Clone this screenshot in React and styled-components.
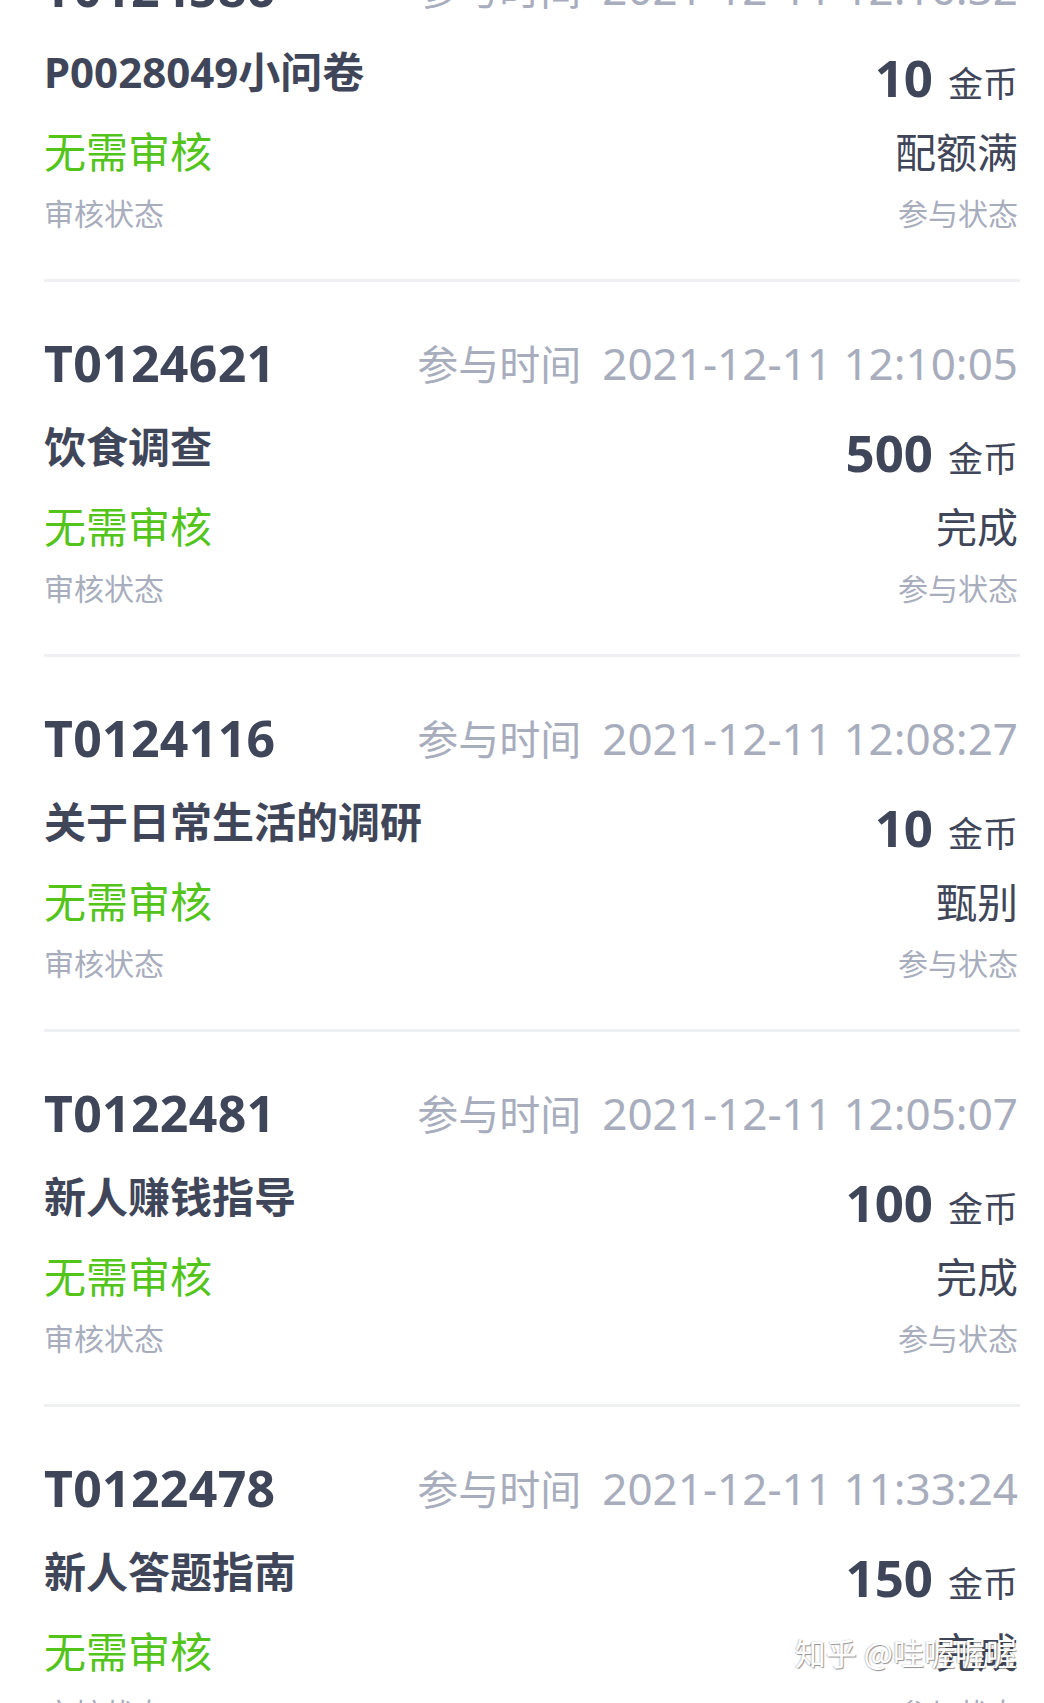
import React from "react";
import styled, { createGlobalStyle } from "styled-components";

const records = [
  { id: "T0124586", time: "2021-12-11 12:16:32", title: "P0028049小问卷", coins: 10, status: "配额满" },
  { id: "T0124621", time: "2021-12-11 12:10:05", title: "饮食调查", coins: 500, status: "完成" },
  { id: "T0124116", time: "2021-12-11 12:08:27", title: "关于日常生活的调研", coins: 10, status: "甄别" },
  { id: "T0122481", time: "2021-12-11 12:05:07", title: "新人赚钱指导", coins: 100, status: "完成" },
  { id: "T0122478", time: "2021-12-11 11:33:24", title: "新人答题指南", coins: 150, status: "完成" },
];

const App = () => (
  <Page>
    <GlobalStyle />
    <List>
      {records.map((r) => (
        <Card key={r.id}>
          <Row $h={62}>
            <Code>{r.id}</Code>
            <Time>
              <TimeLabel>参与时间</TimeLabel>
              {r.time}
            </Time>
          </Row>
          <Row $h={60} $mt={25}>
            <Title>{r.title}</Title>
            <Coins>
              <Amount>{r.coins}</Amount>
              <Unit>金币</Unit>
            </Coins>
          </Row>
          <Row $h={56} $mt={18}>
            <Review>无需审核</Review>
            <Status>{r.status}</Status>
          </Row>
          <Row $h={40} $mt={14}>
            <Caption>审核状态</Caption>
            <Caption>参与状态</Caption>
          </Row>
        </Card>
      ))}
    </List>
    <Watermark>知乎 @哇喔喔喔</Watermark>
  </Page>
);

export default App;

const GlobalStyle = createGlobalStyle`
  html, body {
    margin: 0;
    padding: 0;
    background: #ffffff;
    overflow: hidden;
  }
  body {
    font-family: "Noto Sans", "Noto Sans CJK SC", sans-serif;
  }
`;

const Page = styled.div`
  position: relative;
  width: 1044px;
  height: 1703px;
  overflow: hidden;
  background: #fff;
`;

const List = styled.div`
  margin-top: -93px;
  padding: 0 24px 0 44px;
`;

const Card = styled.div`
  padding: 50px 0 47px;
  border-bottom: 3px solid #eef0f4;
`;

const Row = styled.div`
  display: flex;
  align-items: center;
  justify-content: space-between;
  height: ${(p) => p.$h}px;
  margin-top: ${(p) => p.$mt || 0}px;
  padding-right: 2px;
`;

const Code = styled.div`
  font-family: "Noto Sans", sans-serif;
  font-weight: 700;
  font-size: 50px;
  line-height: 1;
  color: #3f4659;
  letter-spacing: 0.3px;
`;

const Time = styled.div`
  font-family: "Noto Sans", "Noto Sans CJK SC", sans-serif;
  font-size: 44px;
  line-height: 1;
  color: #a8adbd;
  white-space: nowrap;
`;

const TimeLabel = styled.span`
  font-family: "Noto Sans CJK SC", sans-serif;
  font-size: 41px;
  margin-right: 21px;
`;

const Title = styled.div`
  font-family: "Noto Sans", "Noto Sans CJK SC", sans-serif;
  font-weight: 700;
  font-size: 42px;
  line-height: 1;
  color: #3f4659;
  padding-bottom: 5px;
`;

const Coins = styled.div`
  display: flex;
  align-items: baseline;
  gap: 15px;
  padding-top: 6px;
`;

const Amount = styled.span`
  font-family: "Noto Sans", sans-serif;
  font-weight: 700;
  font-size: 51px;
  line-height: 1;
  color: #3f4659;
`;

const Unit = styled.span`
  font-family: "Noto Sans CJK SC", sans-serif;
  font-size: 35px;
  line-height: 1;
  color: #3f4659;
`;

const Review = styled.div`
  font-family: "Noto Sans CJK SC", sans-serif;
  font-size: 42px;
  line-height: 1;
  color: #52c41a;
`;

const Status = styled.div`
  font-family: "Noto Sans CJK SC", sans-serif;
  font-size: 41px;
  line-height: 1;
  color: #3f4659;
`;

const Caption = styled.div`
  font-family: "Noto Sans CJK SC", sans-serif;
  font-size: 30px;
  line-height: 1;
  color: #a8adbd;
`;

const Watermark = styled.div`
  position: absolute;
  right: 27px;
  top: 1636px;
  font-family: "Noto Sans CJK SC", sans-serif;
  font-size: 31px;
  line-height: 1;
  color: #ffffff;
  text-shadow: 1px 1px 1px rgba(60, 60, 60, 0.55), -1px 0 1px rgba(60, 60, 60, 0.25);
  white-space: nowrap;
`;
